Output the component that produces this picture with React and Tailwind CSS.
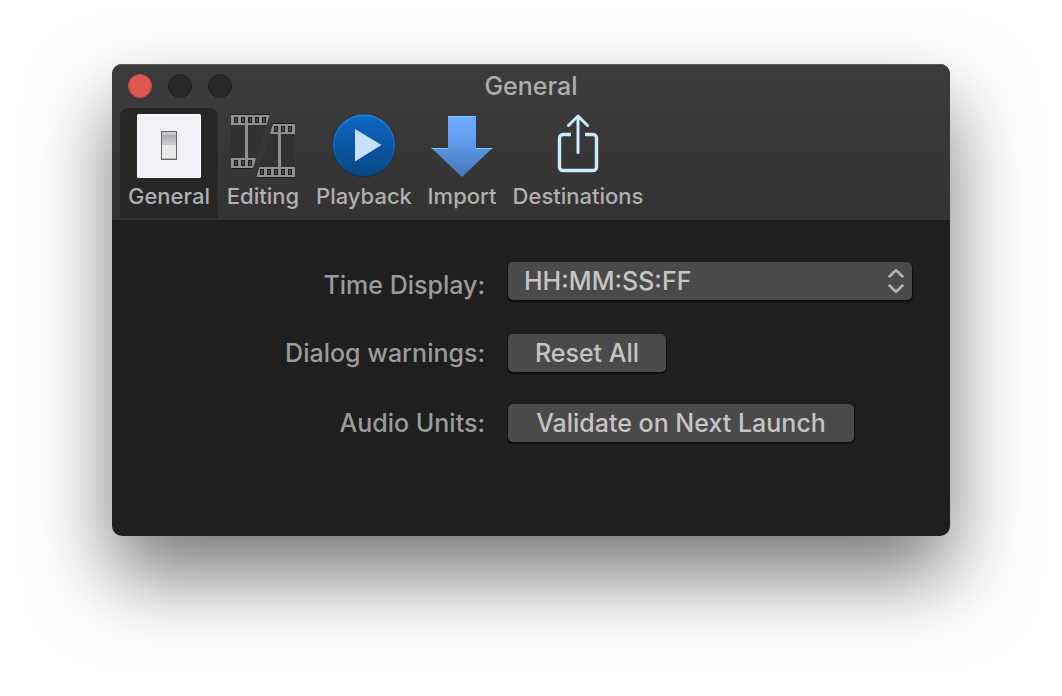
import React from "react";

function GeneralIcon() {
  return (
    <svg className="size-16" viewBox="0 0 64 64" aria-hidden="true">
      <defs>
        <linearGradient id="switchTop" x1="0" y1="0" x2="0" y2="1">
          <stop offset="0" stopColor="#a9abad" />
          <stop offset="1" stopColor="#cfd1d2" />
        </linearGradient>
      </defs>
      <rect width="64" height="64" rx="1.5" fill="#fbfcf8" />
      <rect x="1" y="1.5" width="62" height="61.5" fill="#f0f1f6" />
      <rect x="24.5" y="17.5" width="15" height="28" fill="#e7e8e8" stroke="#63656a" />
      <rect x="25" y="18" width="14" height="3" fill="#c9cacb" />
      <rect x="25" y="21" width="14" height="10" fill="url(#switchTop)" />
      <rect x="25" y="44" width="14" height="1" fill="#b6b8ba" />
    </svg>
  );
}

function EditingIcon() {
  const hole = (x, y) => (
    <rect key={`${x}-${y}`} x={x + 0.5} y={y + 0.5} width="3" height="5" fill="#48494a" stroke="#1d1e1f" />
  );
  return (
    <svg className="size-16" viewBox="0 0 64 64" aria-hidden="true">
      <path d="M0 0H38.5L22 54.5H0Z" fill="#303133" />
      <path d="M42 9H64V64H26Z" fill="#303133" />
      <path d="M0 0H38.5V1H0ZM41.5 9H64V10H41.5Z" fill="#1e1f20" />
      <path d="M0 54H21.5V55H0ZM26 63H64V64H26Z" fill="#1e1f20" />
      <path d="M0 1H38.5L35.5 11H0ZM0 44H25L22 54H0Z" fill="#8f9090" />
      <path d="M42 10H64V20H39ZM28.500 53H64V63H25.5Z" fill="#8f9090" />
      <path d="M14 11H17V44H14ZM47 20H50V53H47Z" fill="#8f9090" />
      {[3, 10, 17, 24, 31].map((x) => hole(x, 3))}
      {[3, 10, 17].map((x) => hole(x, 46))}
      {[43, 50, 57].map((x) => hole(x, 12))}
      {[29, 36, 43, 50, 57].map((x) => hole(x, 55))}
    </svg>
  );
}

function PlaybackIcon() {
  return (
    <svg className="size-16" viewBox="0 0 64 64" aria-hidden="true">
      <defs>
        <linearGradient id="disc" x1="0" y1="0" x2="0" y2="1">
          <stop offset="0" stopColor="#0d68c4" />
          <stop offset="1" stopColor="#074682" />
        </linearGradient>
        <linearGradient id="discRim" x1="0" y1="0" x2="0" y2="1">
          <stop offset="0" stopColor="#1c83ee" />
          <stop offset="0.6" stopColor="#0d62bb" />
          <stop offset="1" stopColor="#07417b" />
        </linearGradient>
      </defs>
      <circle cx="32" cy="32" r="31.5" fill="#26292d" />
      <circle cx="32" cy="31.5" r="30.3" fill="url(#disc)" stroke="url(#discRim)" strokeWidth="1.5" />
      <path d="M23 16L50 32L23 48.5Z" fill="#074c92" />
      <path d="M23 15L49.5 31L23 47.5Z" fill="#c8dfff" />
    </svg>
  );
}

function ImportIcon() {
  return (
    <svg className="size-16" viewBox="0 0 64 64" aria-hidden="true">
      <defs>
        <linearGradient id="arrow" x1="0" y1="0" x2="0" y2="1">
          <stop offset="0" stopColor="#6caaff" />
          <stop offset="0.3" stopColor="#66a3f6" />
          <stop offset="1" stopColor="#4876ba" />
        </linearGradient>
      </defs>
      <path d="M18 2H46V34H62.5L32 63L1.500 34H18Z" fill="url(#arrow)" />
      <path d="M18 2.5H46M1.5 34.5H18.5M45.5 34.5H62.5" stroke="#82c5ff" fill="none" />
    </svg>
  );
}

function DestinationsIcon() {
  return (
    <svg className="size-16" viewBox="0 0 64 64" aria-hidden="true">
      <g fill="none" stroke="#c9ebf8" strokeWidth="3.4">
        <path d="M25 20.500H17A3.500 3.500 0 0 0 13.500 24V53A3.500 3.500 0 0 0 17 56.500H47A3.500 3.500 0 0 0 50.500 53V24A3.500 3.500 0 0 0 47 20.500H39" />
        <path d="M32 3V38.500M22.500 11.500L32 2L41.500 11.500" strokeLinecap="round" strokeLinejoin="round" strokeWidth="3" />
      </g>
    </svg>
  );
}

const tabs = [
  { name: "General", Icon: GeneralIcon, size: "w-[98px]" },
  { name: "Editing", Icon: EditingIcon, size: "w-[90px]" },
  { name: "Playback", Icon: PlaybackIcon, size: "w-[112px]" },
  { name: "Import", Icon: ImportIcon, size: "w-[84px]" },
  { name: "Destinations", Icon: DestinationsIcon, size: "w-[148px]" },
];

const control =
  "h-[38px] rounded-[5px] bg-[#4a4a4a] text-[25px] leading-[38px] text-[#c4c4c4] shadow-[0_1px_1px_1px_rgba(0,0,0,0.55)]";
const label = "self-end text-right text-[25px] leading-[38px] whitespace-nowrap text-[#9b9b9b]";

export default function App() {
  const [active, setActive] = React.useState("General");
  return (
    <main className="min-h-screen bg-white px-28 py-16 font-['Inter','Liberation_Sans',sans-serif] font-medium">
      <section className="overflow-hidden rounded-[10px] bg-[#1f1f1f] shadow-[0_40px_80px_rgba(0,0,0,0.53)]">
        <header className="bg-linear-to-b from-[#3c3c3c] to-[#333333] pb-0.5 shadow-[inset_0_1px_0_#555555]">
          <div className="grid h-11 grid-cols-[1fr_auto_1fr] items-center px-4">
            <div className="flex gap-4">
              <button aria-label="Close" className="size-6 rounded-full border border-[#c9443f] bg-[#dd5750]" />
              <button aria-label="Minimize" className="size-6 rounded-full border border-[#222222] bg-[#292929]" />
              <button aria-label="Zoom" className="size-6 rounded-full border border-[#222222] bg-[#292929]" />
            </div>
            <h1 className="text-[25px] leading-[38px] text-[#adadad]">General</h1>
          </div>
          <nav className="flex px-2" aria-label="Preferences">
            {tabs.map(({ name, Icon, size }) => (
              <button
                key={name}
                onClick={() => setActive(name)}
                aria-pressed={active === name}
                className={`${size} flex h-[110px] flex-col items-center gap-1 rounded-t-lg pt-1.5 ${
                  active === name ? "bg-[#272727]" : ""
                }`}
              >
                <Icon />
                <span className="text-[22px] leading-7 text-[#b0b0b0]">{name}</span>
              </button>
            ))}
          </nav>
        </header>
        <form
          onSubmit={(e) => e.preventDefault()}
          className="grid grid-cols-[373px_minmax(0,1fr)] grid-rows-[42px_38px_40px] gap-x-[23px] gap-y-[30px] pt-[42px] pr-[38px] pb-[94px]"
        >
          <label htmlFor="time" className={label}>Time Display:</label>
          <div className="relative">
            <select id="time" className={`${control} block w-full appearance-none pl-4`}>
              <option>HH:MM:SS:FF</option>
              <option>HH:MM:SS</option>
              <option>Frames</option>
              <option>Seconds</option>
            </select>
            <svg className="pointer-events-none absolute top-1.5 right-2 h-[26px] w-4" viewBox="0 0 16 26" aria-hidden="true">
              <path
                d="M1.500 8.500L8 2.200L14.500 8.500M1.500 17.500L8 23.800L14.500 17.500"
                fill="none"
                stroke="#b9b9b9"
                strokeWidth="2.5"
                strokeLinecap="round"
                strokeLinejoin="round"
              />
            </svg>
          </div>
          <label htmlFor="reset" className={label}>Dialog warnings:</label>
          <button id="reset" type="button" className={`${control} w-[158px] self-end justify-self-start`}>Reset All</button>
          <label htmlFor="validate" className={label}>Audio Units:</label>
          <button id="validate" type="button" className={`${control} w-[346px] self-end justify-self-start`}>
            Validate on Next Launch
          </button>
        </form>
      </section>
    </main>
  );
}
